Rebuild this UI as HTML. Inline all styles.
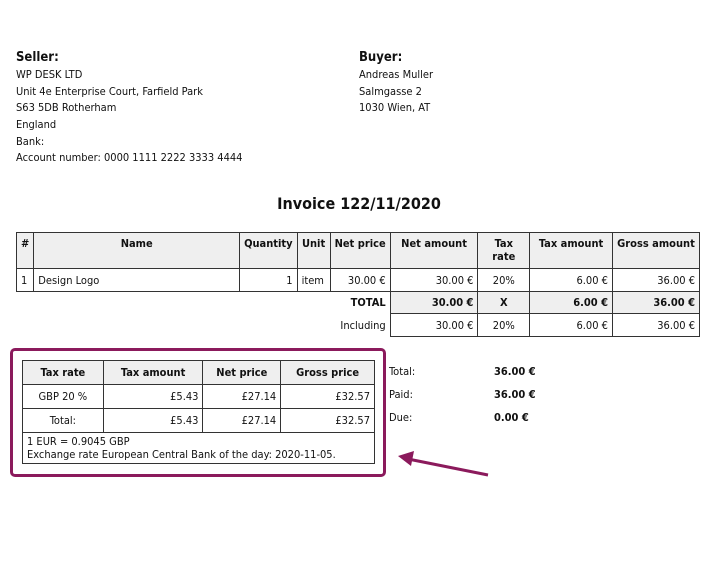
<!DOCTYPE html>
<html><head><meta charset="utf-8"><style>
*{margin:0;padding:0;box-sizing:border-box}
body{width:720px;height:565px;background:#fff;position:relative;font-family:"DejaVu Sans Condensed","DejaVu Sans","Liberation Sans",sans-serif;font-size:11px;color:#111;overflow:hidden}
.a{position:absolute;white-space:nowrap}
.h{font-weight:bold;font-size:13px}
.lines div{height:16.7px;line-height:16.7px}
table{position:absolute;border-collapse:collapse}
td,th{border:1px solid #333;padding:0 4px;font-size:11px;white-space:nowrap}
th{background:#efefef;font-weight:bold;text-align:center;vertical-align:top;padding-top:4px}
.r{text-align:right}.c{text-align:center}
.nb{border:none}
</style></head><body>
<div class="a h" style="left:16px;top:50px">Seller:</div>
<div class="a lines" style="left:16px;top:67px">
<div>WP DESK LTD</div><div>Unit 4e Enterprise Court, Farfield Park</div><div>S63 5DB Rotherham</div><div>England</div><div>Bank:</div><div>Account number: 0000 1111 2222 3333 4444</div></div>
<div class="a h" style="left:359px;top:50px">Buyer:</div>
<div class="a lines" style="left:359px;top:67px"><div>Andreas Muller</div><div>Salmgasse 2</div><div>1030 Wien, AT</div></div>
<div class="a" style="left:0;width:718px;text-align:center;top:194px;font-weight:bold;font-size:16px">Invoice 122/11/2020</div>

<table style="left:16px;top:232px;width:684px">
<colgroup><col style="width:17px"><col style="width:208px"><col style="width:56px"><col style="width:33px"><col style="width:60px"><col style="width:88px"><col style="width:52px"><col style="width:83px"><col style="width:87px"></colgroup>
<tr style="height:36px"><th>#</th><th>Name</th><th>Quantity</th><th>Unit</th><th>Net price</th><th>Net amount</th><th>Tax<br>rate</th><th>Tax amount</th><th>Gross amount</th></tr>
<tr style="height:23px"><td>1</td><td>Design Logo</td><td class="r">1</td><td>item</td><td class="r">30.00 €</td><td class="r">30.00 €</td><td class="c">20%</td><td class="r">6.00 €</td><td class="r">36.00 €</td></tr>
<tr style="height:22px"><td class="nb"></td><td class="nb"></td><td class="nb"></td><td class="nb"></td><td class="nb r" style="font-weight:bold">TOTAL</td><td class="r" style="background:#efefef;font-weight:bold">30.00 €</td><td class="c" style="background:#efefef;font-weight:bold">X</td><td class="r" style="background:#efefef;font-weight:bold">6.00 €</td><td class="r" style="background:#efefef;font-weight:bold">36.00 €</td></tr>
<tr style="height:23px"><td class="nb"></td><td class="nb"></td><td class="nb"></td><td class="nb"></td><td class="nb r">Including</td><td class="r">30.00 €</td><td class="c">20%</td><td class="r">6.00 €</td><td class="r">36.00 €</td></tr>
</table>

<div class="a" style="left:10px;top:348px;width:376px;height:129px;border:3px solid #8b1a5c;border-radius:5px"></div>
<table style="left:22px;top:360px;width:353px">
<colgroup><col style="width:81px"><col style="width:100px"><col style="width:78px"><col style="width:94px"></colgroup>
<tr style="height:24px"><th style="vertical-align:middle;padding-top:0">Tax rate</th><th style="vertical-align:middle;padding-top:0">Tax amount</th><th style="vertical-align:middle;padding-top:0">Net price</th><th style="vertical-align:middle;padding-top:0">Gross price</th></tr>
<tr style="height:24px"><td class="c">GBP 20 %</td><td class="r">£5.43</td><td class="r">£27.14</td><td class="r">£32.57</td></tr>
<tr style="height:24px"><td class="c">Total:</td><td class="r">£5.43</td><td class="r">£27.14</td><td class="r">£32.57</td></tr>
<tr style="height:31px"><td colspan="4" style="line-height:13.5px;padding:1px 4px">1 EUR = 0.9045 GBP<br>Exchange rate European Central Bank of the day: 2020-11-05.</td></tr>
</table>
<div class="a" style="left:389px;top:365px">Total:</div>
<div class="a" style="left:389px;top:388px">Paid:</div>
<div class="a" style="left:389px;top:411px">Due:</div>
<div class="a" style="left:494px;top:365px;font-weight:bold">36.00 €</div>
<div class="a" style="left:494px;top:388px;font-weight:bold">36.00 €</div>
<div class="a" style="left:494px;top:411px;font-weight:bold">0.00 €</div>
<svg class="a" style="left:0;top:0" width="720" height="565"><line x1="488" y1="475" x2="408" y2="459" stroke="#8b1a5c" stroke-width="3"/><polygon points="398,456 414,451 411,466" fill="#8b1a5c"/></svg>
</body></html>
